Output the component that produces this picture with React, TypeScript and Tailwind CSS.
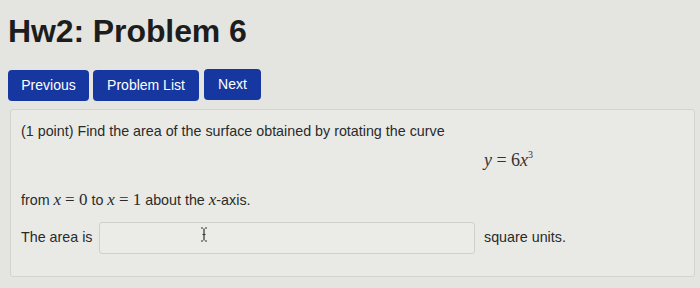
import React from "react";

const serif = { fontFamily: '"Liberation Serif", "DejaVu Serif", serif' };

export default function App() {
  return (
    <div
      className="w-[700px] h-[288px] bg-[#e4e5e1] text-[#222] overflow-hidden"
      style={{ fontFamily: '"Liberation Sans", Arial, sans-serif' }}
    >
      <div className="pl-[8px] pt-[12px]">
        <h1 className="text-[32px] font-bold leading-[38px] tracking-[-0.1px] text-[#1d1d1d]">Hw2: Problem 6</h1>
        <div className="flex gap-[4px] mt-[20px] items-center">
          <button className="h-[31px] w-[81px] rounded-[4px] bg-[#1737a0] text-white text-[14px]">Previous</button>
          <button className="h-[31px] w-[106px] rounded-[4px] bg-[#1737a0] text-white text-[14px]">Problem List</button>
          <button className="h-[31px] w-[57px] rounded-[4px] bg-[#1737a0] text-white text-[14px] ml-[1px] -mt-[2px]">Next</button>
        </div>
      </div>
      <div className="ml-[10px] mr-[5px] mt-[8px] h-[168px] border border-[#d3d4d0] rounded-[3px] bg-[#e9eae6] px-[10px] pt-[12px] text-[14.3px] text-[#2a2a2a]">
        <p className="leading-[18px]">(1 point) Find the area of the surface obtained by rotating the curve</p>
        <div className="flex justify-center pl-[312px] mt-[8px] text-[18px] leading-[24px] text-[#333]" style={serif}>
          <span>
            <i>y</i> = 6<i>x</i>
            <span className="relative -top-[8px] text-[10px]">3</span>
          </span>
        </div>
        <p className="mt-[15px] leading-[20px]">
          from <i className="text-[17px]" style={serif}>x</i> <span className="text-[17px]" style={serif}>=&nbsp;0</span> to{" "}
          <i className="text-[17px]" style={serif}>x</i> <span className="text-[17px]" style={serif}>=&nbsp;1</span> about the{" "}
          <i className="text-[17px]" style={serif}>x</i>-axis.
        </p>
        <div className="flex items-center mt-[12px]">
          <span className="w-[78px]">The area is</span>
          <div className="relative w-[376px] h-[32px] border border-[#cfd0cc] rounded-[3px] bg-[#ebece8]">
            <svg className="absolute left-[100px] top-[4px]" width="8" height="15" viewBox="0 0 8 15">
              <path d="M1 1 H3 M5 1 H7 M4 1.5 V13.5 M1 14 H3 M5 14 H7 M2.5 7.5 H5.5" stroke="#333" strokeWidth="1.2" fill="none" />
            </svg>
          </div>
          <span className="ml-[9px]">square units.</span>
        </div>
      </div>
    </div>
  );
}
